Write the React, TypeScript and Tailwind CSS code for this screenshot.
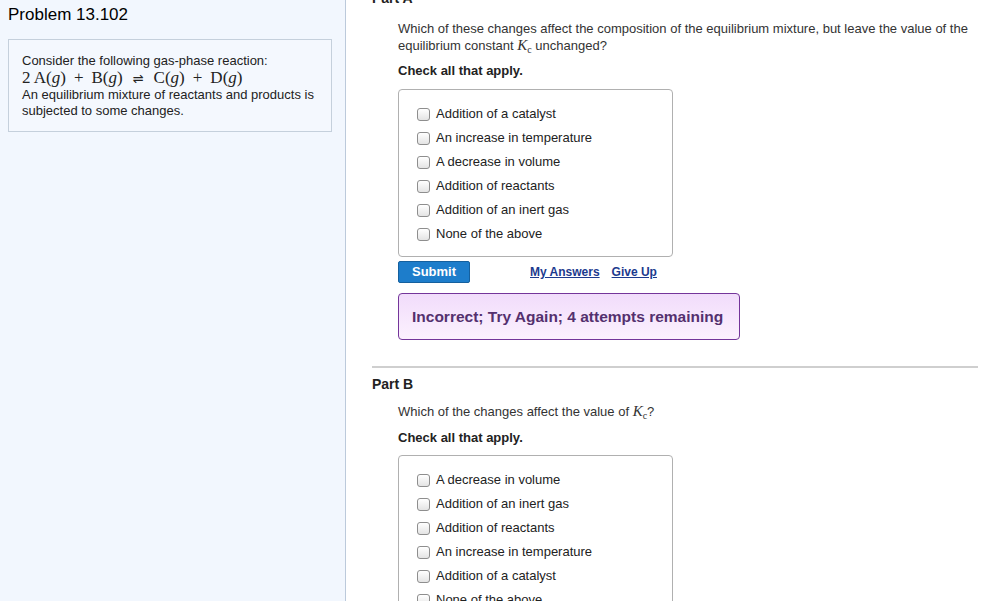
import React from 'react';

const sans = { fontFamily: '"Liberation Sans", Arial, sans-serif' };

const Kc = () => (
  <span className="font-['Liberation_Serif',serif] text-[15px] italic leading-[16px]">
    K<span className="relative top-[3px] text-[10px] not-italic leading-[10px]">c</span>
  </span>
);

const Box = () => (
  <span className="mr-[6px] inline-block h-[13px] w-[13px] shrink-0 rounded-[3px] border border-[#8e8e8e] bg-gradient-to-b from-white to-[#e4e4e4]" />
);

const Options = ({ items }: { items: string[] }) => (
  <div className="w-[275px] rounded-[4px] border border-[#b0b0b0] bg-white px-[18px] pt-[12px] pb-[10px]">
    {items.map((it) => (
      <label key={it} className="flex h-[24px] items-center text-[13px] text-[#222]">
        <Box />
        {it}
      </label>
    ))}
  </div>
);

export default function App() {
  return (
    <div className="flex h-[601px] w-[982px] overflow-hidden bg-white text-[#222]" style={sans}>
      <aside className="h-full w-[346px] shrink-0 border-r border-[#bccadb] bg-[#f2f7fe] px-2 pt-[4px]">
        <h1 className="text-[17px] leading-[22px] text-black">Problem 13.102</h1>
        <div className="mt-[13px] h-[93px] w-[324px] border border-[#c5d0dc] bg-[#f4f8fe] px-[13px] pt-[13px] text-[13px] leading-[16px]">
          <p>Consider the following gas-phase reaction:</p>
          <p className="whitespace-nowrap font-['Liberation_Serif',serif] text-[17px] leading-[17px]">
            2 A(<i>g</i>)<span className="mx-[8px]">+</span>B(<i>g</i>)
            <span className="mx-[10px] font-['DejaVu_Sans',sans-serif] text-[13px]">⇌</span>
            C(<i>g</i>)<span className="mx-[8px]">+</span>D(<i>g</i>)
          </p>
          <p>An equilibrium mixture of reactants and products is subjected to some changes.</p>
        </div>
      </aside>

      <main className="flex-1 pl-[26px] pr-[4px]">
        <h2 className="-mt-[12px] text-[14px] font-bold leading-[20px]">Part A</h2>
        <div className="pl-[26px]">
          <p className="mt-[13px] text-[13px] leading-[16px] text-[#333]">
            Which of these changes affect the composition of the equilibrium mixture, but leave the value of the
            equilibrium constant <Kc /> unchanged?
          </p>
          <p className="mt-[9px] text-[13px] font-bold leading-[16px]">Check all that apply.</p>
          <div className="mt-[10px]">
            <Options
              items={[
                'Addition of a catalyst',
                'An increase in temperature',
                'A decrease in volume',
                'Addition of reactants',
                'Addition of an inert gas',
                'None of the above',
              ]}
            />
          </div>
          <div className="mt-[4px] flex items-center">
            <button className="h-[22px] w-[72px] rounded-[2px] border border-[#15609e] bg-[#1d7dcb] text-[13px] font-bold text-white">
              Submit
            </button>
            <a className="ml-[60px] text-[12px] font-bold text-[#1c3a8e] underline">My Answers</a>
            <a className="ml-[12px] text-[12px] font-bold text-[#1c3a8e] underline">Give Up</a>
          </div>
          <div className="mt-[10px] flex h-[47px] w-[342px] items-center whitespace-nowrap rounded-[4px] border border-[#74359a] bg-gradient-to-b from-[#f1dcfb] to-[#fcf1fe] px-[13px] text-[15.5px] font-bold text-[#54306e]">
            Incorrect; Try Again; 4 attempts remaining
          </div>
        </div>

        <hr className="mt-[26px] border-t-2 border-[#cfcfcf]" />

        <h2 className="mt-[6px] text-[14px] font-bold leading-[20px]">Part B</h2>
        <div className="pl-[26px]">
          <p className="mt-[9px] text-[13px] leading-[16px] text-[#333]">
            Which of the changes affect the value of <Kc />?
          </p>
          <p className="mt-[10px] text-[13px] font-bold leading-[16px]">Check all that apply.</p>
          <div className="mt-[9px]">
            <Options
              items={[
                'A decrease in volume',
                'Addition of an inert gas',
                'Addition of reactants',
                'An increase in temperature',
                'Addition of a catalyst',
                'None of the above',
              ]}
            />
          </div>
        </div>
      </main>
    </div>
  );
}
